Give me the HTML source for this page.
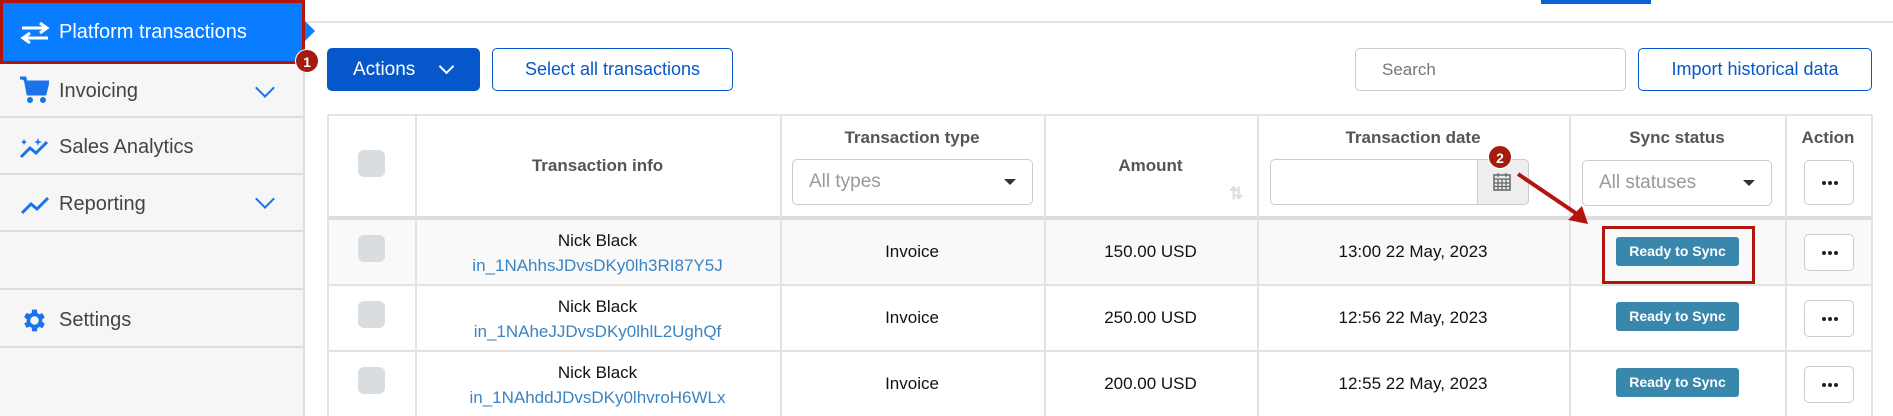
<!DOCTYPE html>
<html><head><style>
*{box-sizing:border-box;margin:0;padding:0}
body{width:1893px;height:416px;overflow:hidden;background:#fff;font-family:"Liberation Sans",Arial,sans-serif;position:relative}
.a{position:absolute}
.side{left:0;top:0;width:305px;height:416px;background:#f6f6f6;border-right:2px solid #ddd}
.item{position:absolute;left:0;width:304px;border-bottom:2px solid #ddd;font-size:20px;color:#444}
.item span{position:absolute;left:59px}
.chev{position:absolute;left:258px;width:14px;height:14px;border-right:2.5px solid #1a73e8;border-bottom:2.5px solid #1a73e8;transform:rotate(45deg)}
.th{position:absolute;font-weight:bold;color:#555;font-size:17px;text-align:center}
.vl{position:absolute;top:114px;width:2px;height:302px;background:#e3e3e3}
.hl{position:absolute;left:327px;width:1545px;height:2px;background:#e3e3e3}
.cb{position:absolute;left:358px;width:27px;height:27px;border-radius:6px;background:#d9dde0}
.cell{position:absolute;font-size:17px;color:#111;text-align:center}
.link{color:#3b84c4}
.badge{position:absolute;left:1616px;width:123px;height:29px;background:#3a87ad;color:#fff;font-weight:bold;font-size:14px;text-align:center;line-height:29px;border-radius:3px}
.dots{position:absolute;left:1804px;width:50px;height:37px;border:1px solid #ccc;border-radius:5px;background:#fff}
.dots i{position:absolute;top:50%;width:4px;height:4px;margin-top:-2px;border-radius:50%;background:#222}
.sel{position:absolute;height:46px;border:1px solid #ccc;border-radius:5px;background:#fff;font-size:19px;color:#999;line-height:44px;padding-left:16px}
.caret{position:absolute;right:16px;top:19px;border-left:6px solid transparent;border-right:6px solid transparent;border-top:6px solid #333}
.num{position:absolute;width:24px;height:24px;border-radius:50%;background:#a51c0e;color:#fff;font-weight:bold;font-size:14px;text-align:center;line-height:24px;border:1px solid #fff}
</style></head><body>
<div class="a side"></div>
<div class="a" style="left:0;top:0;width:305px;height:64px;background:#0a7cff;border:3px solid #b3140d"></div>
<svg class="a" style="left:20px;top:22px" width="30" height="22" viewBox="0 0 30 22"><path d="M2 6H26M20 1L27 6L20 11M28 16H4M10 11L3 16L10 21" stroke="#fff" stroke-width="3" fill="none"/></svg>
<div class="a" style="left:59px;top:21px;font-size:20px;color:#fff">Platform transactions</div>
<div class="a" style="left:305px;top:21px;width:0;height:0;border-top:10px solid transparent;border-bottom:10px solid transparent;border-left:10px solid #0a7cff"></div>
<div class="num" style="left:295px;top:49px">1</div>

<div class="item" style="top:64px;height:54px"><span style="top:16px">Invoicing</span><div class="chev" style="top:17px"></div></div>
<svg class="a" style="left:19px;top:76px" width="30" height="28" viewBox="0 0 30 28"><path d="M1 2H6L9 18H26L29 6H7" stroke="#1a73e8" stroke-width="3" fill="#1a73e8"/><circle cx="11" cy="24" r="3" fill="#1a73e8"/><circle cx="24" cy="24" r="3" fill="#1a73e8"/></svg>
<div class="item" style="top:118px;height:57px"><span style="top:18px">Sales Analytics</span></div>
<svg class="a" style="left:19px;top:136px" width="32" height="24" viewBox="0 0 32 24"><path d="M2 21L11 12L17 17L28 6" stroke="#1a73e8" stroke-width="3" fill="none"/><path d="M19 2L20 5L23 6L20 7L19 10L18 7L15 6L18 5Z M5 3L6 5L8 6L6 7L5 9L4 7L2 6L4 5Z" fill="#1a73e8"/></svg>
<div class="item" style="top:175px;height:57px"><span style="top:18px">Reporting</span><div class="chev" style="top:17px"></div></div>
<svg class="a" style="left:20px;top:195px" width="30" height="20" viewBox="0 0 30 20"><path d="M2 18L11 9L17 14L28 3" stroke="#1a73e8" stroke-width="3" fill="none"/></svg>
<div class="item" style="top:232px;height:58px"></div>
<div class="item" style="top:290px;height:58px"><span style="top:19px">Settings</span></div>
<svg class="a" style="left:20px;top:306px" width="29" height="29" viewBox="0 0 24 24"><path fill="#1a73e8" d="M19.4 13a7.5 7.5 0 000-2l2.1-1.6-2-3.5-2.5 1a7 7 0 00-1.7-1L15 3h-4l-.4 2.7a7 7 0 00-1.7 1l-2.5-1-2 3.5L6.6 11a7.5 7.5 0 000 2l-2.1 1.6 2 3.5 2.5-1a7 7 0 001.7 1L11 21h4l.4-2.7a7 7 0 001.7-1l2.5 1 2-3.5zM13 15.5a3.5 3.5 0 110-7 3.5 3.5 0 010 7z" transform="translate(-1 0)"/></svg>

<div class="a" style="left:307px;top:21px;width:1586px;height:2px;background:#e3e3e3"></div>
<div class="a" style="left:1541px;top:0;width:110px;height:4px;background:#0a64d6"></div>

<div class="a" style="left:327px;top:48px;width:153px;height:43px;background:#0657c9;border-radius:5px;color:#fff;font-size:19px;line-height:43px;padding-left:26px">Actions</div>
<div class="a" style="left:441px;top:61px;width:11px;height:11px;border-right:2.5px solid #fff;border-bottom:2.5px solid #fff;transform:rotate(45deg)"></div>
<div class="a" style="left:492px;top:48px;width:241px;height:43px;border:1px solid #0657c9;border-radius:5px;color:#0657c9;font-size:18px;line-height:41px;text-align:center">Select all transactions</div>
<div class="a" style="left:1355px;top:48px;width:271px;height:43px;border:1px solid #ccc;border-radius:5px;color:#777;font-size:17px;line-height:41px;padding-left:26px">Search</div>
<div class="a" style="left:1638px;top:48px;width:234px;height:43px;border:1px solid #0657c9;border-radius:5px;color:#0657c9;font-size:18px;line-height:41px;text-align:center">Import historical data</div>

<div class="hl" style="top:114px"></div>
<div class="a" style="left:327px;top:216px;width:1545px;height:4px;background:#ddd"></div>
<div class="a" style="left:327px;top:220px;width:1545px;height:64px;background:#f9f9f9"></div>
<div class="hl" style="top:284px"></div>
<div class="hl" style="top:350px"></div>
<div class="vl" style="left:327px"></div><div class="vl" style="left:415px"></div><div class="vl" style="left:780px"></div><div class="vl" style="left:1044px"></div><div class="vl" style="left:1257px"></div><div class="vl" style="left:1569px"></div><div class="vl" style="left:1785px"></div><div class="vl" style="left:1871px"></div>

<div class="cb" style="top:150px"></div>
<div class="th" style="left:415px;width:365px;top:156px">Transaction info</div>
<div class="th" style="left:780px;width:264px;top:128px">Transaction type</div>
<div class="sel" style="left:792px;top:159px;width:241px">All types<div class="caret"></div></div>
<div class="th" style="left:1044px;width:213px;top:156px">Amount</div>
<div class="a" style="left:1229px;top:184px;color:#ddd;font-size:17px;font-weight:bold">⇅</div>
<div class="th" style="left:1257px;width:312px;top:128px">Transaction date</div>
<div class="a" style="left:1270px;top:159px;width:259px;height:46px;border:1px solid #ccc;border-radius:5px;background:#fff"></div>
<div class="a" style="left:1477px;top:159px;width:52px;height:46px;border:1px solid #ccc;border-radius:0 5px 5px 0;background:#eee"></div>
<svg class="a" style="left:1493px;top:172px" width="18" height="19" viewBox="0 0 18 19"><rect x="1" y="3" width="16" height="15" fill="none" stroke="#666" stroke-width="1.5"/><path d="M1 7H17M1 11H17M1 14.5H17M5 7V18M9 7V18M13 7V18M5 1V5M13 1V5" stroke="#666" stroke-width="1.3"/></svg>
<div class="th" style="left:1569px;width:216px;top:128px">Sync status</div>
<div class="sel" style="left:1582px;top:160px;width:190px">All statuses<div class="caret"></div></div>
<div class="th" style="left:1785px;width:86px;top:128px">Action</div>
<div class="dots" style="top:160px;height:45px"><i style="left:17px"></i><i style="left:23px"></i><i style="left:29px"></i></div>

<div class="cb" style="top:235px"></div><div class="cb" style="top:301px"></div><div class="cb" style="top:367px"></div>
<div class="cell" style="left:415px;width:365px;top:228px;line-height:25px">Nick Black<br><span class="link">in_1NAhhsJDvsDKy0lh3RI87Y5J</span></div>
<div class="cell" style="left:415px;width:365px;top:294px;line-height:25px">Nick Black<br><span class="link">in_1NAheJJDvsDKy0lhlL2UghQf</span></div>
<div class="cell" style="left:415px;width:365px;top:360px;line-height:25px">Nick Black<br><span class="link">in_1NAhddJDvsDKy0lhvroH6WLx</span></div>
<div class="cell" style="left:780px;width:264px;top:242px">Invoice</div>
<div class="cell" style="left:780px;width:264px;top:308px">Invoice</div>
<div class="cell" style="left:780px;width:264px;top:374px">Invoice</div>
<div class="cell" style="left:1044px;width:213px;top:242px">150.00 USD</div>
<div class="cell" style="left:1044px;width:213px;top:308px">250.00 USD</div>
<div class="cell" style="left:1044px;width:213px;top:374px">200.00 USD</div>
<div class="cell" style="left:1257px;width:312px;top:242px">13:00 22 May, 2023</div>
<div class="cell" style="left:1257px;width:312px;top:308px">12:56 22 May, 2023</div>
<div class="cell" style="left:1257px;width:312px;top:374px">12:55 22 May, 2023</div>
<div class="badge" style="top:237px">Ready to Sync</div>
<div class="badge" style="top:302px">Ready to Sync</div>
<div class="badge" style="top:368px">Ready to Sync</div>
<div class="dots" style="top:234px"><i style="left:17px"></i><i style="left:23px"></i><i style="left:29px"></i></div>
<div class="dots" style="top:300px"><i style="left:17px"></i><i style="left:23px"></i><i style="left:29px"></i></div>
<div class="dots" style="top:366px"><i style="left:17px"></i><i style="left:23px"></i><i style="left:29px"></i></div>

<div class="a" style="left:1602px;top:226px;width:153px;height:58px;border:3px solid #b3140d"></div>
<svg class="a" style="left:1500px;top:160px" width="100" height="75" viewBox="0 0 100 75"><path d="M18 14L80 56" stroke="#b3140d" stroke-width="4"/><path d="M88 64L68 60L82 46Z" fill="#b3140d"/></svg>
<div class="num" style="left:1488px;top:145px">2</div>
</body></html>
